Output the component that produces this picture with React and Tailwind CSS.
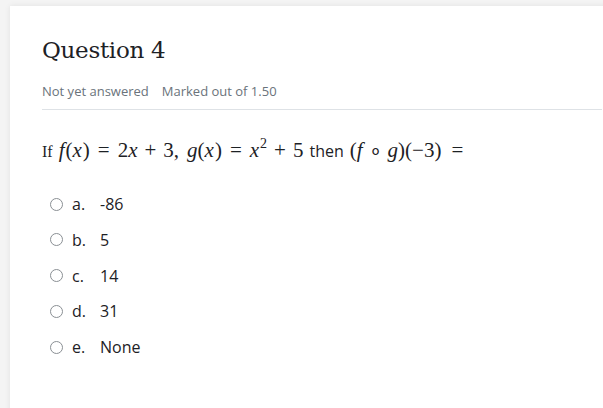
import React from "react";

const Op = ({ c, w = "mx-[8px]" }) => <span className={w}>{c}</span>;

export default function App() {
  const opts = [
    ["a.", "-86"],
    ["b.", "5"],
    ["c.", "14"],
    ["d.", "31"],
    ["e.", "None"],
  ];
  return (
    <div className="w-[603px] h-[408px] bg-[#f4f4f4] pl-[10px] pt-[6px] overflow-hidden">
      <div className="w-[620px] h-[420px] bg-white shadow-[0_0_6px_rgba(0,0,0,0.08)] pl-[32px] pt-[30px]">
        <h2 className="text-[#1d2125] text-[23px] leading-[28px] font-['DejaVu_Serif',serif] tracking-[-0.3px]">
          Question 4
        </h2>
        <div className="mt-[18px] flex gap-[13px] text-[13px] text-[#6a737b] font-['Open_Sans',sans-serif] leading-[18px]">
          <span>Not yet answered</span>
          <span>Marked out of 1.50</span>
        </div>
        <div className="mt-[9px] mr-[28px] h-px bg-[#dee2e6]" />
        <p className="mt-[28px] h-[24px] text-[#1d2125] text-[21px] font-['Liberation_Serif',serif] leading-[24px] whitespace-nowrap">
          <span className="text-[16px] mr-[6px]">If</span>
          <i>f</i><span className="ml-[1px]">(</span><i>x</i><span className="ml-[1px]">)</span>
          <Op c="=" />
          2<i>x</i>
          <Op c="+" w="mx-[7px]" />
          3,
          <i className="ml-[8px]">g</i>(<i>x</i><span className="ml-[1px]">)</span>
          <Op c="=" />
          <i>x</i>
          <span className="text-[14px] relative -top-[9px] ml-[1px]">2</span>
          <Op c="+" w="mx-[7px]" />
          5
          <span className="font-['Open_Sans',sans-serif] text-[16px] mx-[6px]">then</span>
          (<i>f</i>
          <Op c="∘" w="mx-[6px]" />
          <i>g</i>)(−3)
          <Op c="=" w="ml-[10px]" />
        </p>
        <div className="mt-[31px] ml-[8px] flex flex-col gap-[13.75px] font-['Open_Sans',sans-serif] text-[16px] text-[#1d2125]">
          {opts.map(([l, v]) => (
            <div key={l} className="flex items-center h-[22px]">
              <span className="w-[13px] h-[13px] rounded-full border border-[#8a8f94] bg-white" />
              <span className="ml-[9px] w-[28px]">{l}</span>
              <span>{v}</span>
            </div>
          ))}
        </div>
      </div>
    </div>
  );
}
